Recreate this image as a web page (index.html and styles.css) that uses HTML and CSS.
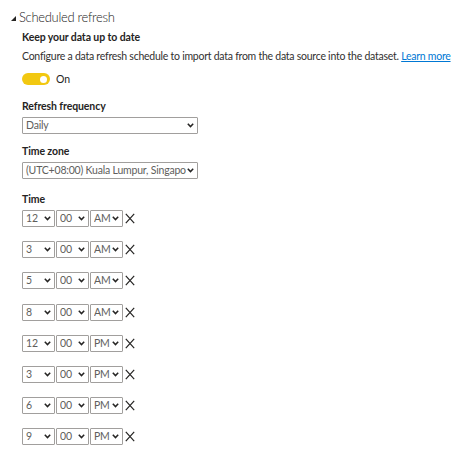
FILE: index.html
```html
<!DOCTYPE html>
<html>
<head>
<meta charset="utf-8">
<link rel="stylesheet" href="styles.css">
</head>
<body>
<div class="panel">
  <div class="section-head">
    <svg class="caret" width="5" height="5" viewBox="0 0 5 5"><polygon points="5,0 5,5 0,5" fill="#252423"/></svg>
    <span class="section-title">Scheduled refresh</span>
  </div>
  <div class="content">
    <div class="subhead">Keep your data up to date</div>
    <div class="desc">Configure a data refresh schedule to import data from the data source into the dataset. <a href="#" class="link">Learn more</a></div>
    <div class="toggle-row">
      <span class="toggle"><span class="knob"></span></span>
      <span class="toggle-label">On</span>
    </div>

    <div class="field-label first">Refresh frequency</div>
    <div class="select wide"><span class="sel-text">Daily</span><svg class="chev" width="7" height="5" viewBox="0 0 7 5"><polyline points="0.8,0.8 3.5,3.6 6.2,0.8" fill="none" stroke="#252423" stroke-width="1.5"/></svg></div>

    <div class="field-label">Time zone</div>
    <div class="select wide"><span class="sel-text">(UTC+08:00) Kuala Lumpur, Singapore</span><svg class="chev" width="7" height="5" viewBox="0 0 7 5"><polyline points="0.8,0.8 3.5,3.6 6.2,0.8" fill="none" stroke="#252423" stroke-width="1.5"/></svg></div>

    <div class="field-label time-label">Time</div>
    <div class="times">
      <div class="time-row"><div class="select small"><span class="sel-text">12</span><svg class="chev" width="7" height="5" viewBox="0 0 7 5"><polyline points="0.8,0.8 3.5,3.6 6.2,0.8" fill="none" stroke="#252423" stroke-width="1.5"/></svg></div><div class="select small"><span class="sel-text">00</span><svg class="chev" width="7" height="5" viewBox="0 0 7 5"><polyline points="0.8,0.8 3.5,3.6 6.2,0.8" fill="none" stroke="#252423" stroke-width="1.5"/></svg></div><div class="select small"><span class="sel-text">AM</span><svg class="chev" width="7" height="5" viewBox="0 0 7 5"><polyline points="0.8,0.8 3.5,3.6 6.2,0.8" fill="none" stroke="#252423" stroke-width="1.5"/></svg></div><svg class="remove" width="10" height="11" viewBox="0 0 10 11"><path d="M0.8,0.8 L9.2,10.2 M9.2,0.8 L0.8,10.2" stroke="#252423" stroke-width="1.2" fill="none"/></svg></div>
      <div class="time-row"><div class="select small"><span class="sel-text">3</span><svg class="chev" width="7" height="5" viewBox="0 0 7 5"><polyline points="0.8,0.8 3.5,3.6 6.2,0.8" fill="none" stroke="#252423" stroke-width="1.5"/></svg></div><div class="select small"><span class="sel-text">00</span><svg class="chev" width="7" height="5" viewBox="0 0 7 5"><polyline points="0.8,0.8 3.5,3.6 6.2,0.8" fill="none" stroke="#252423" stroke-width="1.5"/></svg></div><div class="select small"><span class="sel-text">AM</span><svg class="chev" width="7" height="5" viewBox="0 0 7 5"><polyline points="0.8,0.8 3.5,3.6 6.2,0.8" fill="none" stroke="#252423" stroke-width="1.5"/></svg></div><svg class="remove" width="10" height="11" viewBox="0 0 10 11"><path d="M0.8,0.8 L9.2,10.2 M9.2,0.8 L0.8,10.2" stroke="#252423" stroke-width="1.2" fill="none"/></svg></div>
      <div class="time-row"><div class="select small"><span class="sel-text">5</span><svg class="chev" width="7" height="5" viewBox="0 0 7 5"><polyline points="0.8,0.8 3.5,3.6 6.2,0.8" fill="none" stroke="#252423" stroke-width="1.5"/></svg></div><div class="select small"><span class="sel-text">00</span><svg class="chev" width="7" height="5" viewBox="0 0 7 5"><polyline points="0.8,0.8 3.5,3.6 6.2,0.8" fill="none" stroke="#252423" stroke-width="1.5"/></svg></div><div class="select small"><span class="sel-text">AM</span><svg class="chev" width="7" height="5" viewBox="0 0 7 5"><polyline points="0.8,0.8 3.5,3.6 6.2,0.8" fill="none" stroke="#252423" stroke-width="1.5"/></svg></div><svg class="remove" width="10" height="11" viewBox="0 0 10 11"><path d="M0.8,0.8 L9.2,10.2 M9.2,0.8 L0.8,10.2" stroke="#252423" stroke-width="1.2" fill="none"/></svg></div>
      <div class="time-row"><div class="select small"><span class="sel-text">8</span><svg class="chev" width="7" height="5" viewBox="0 0 7 5"><polyline points="0.8,0.8 3.5,3.6 6.2,0.8" fill="none" stroke="#252423" stroke-width="1.5"/></svg></div><div class="select small"><span class="sel-text">00</span><svg class="chev" width="7" height="5" viewBox="0 0 7 5"><polyline points="0.8,0.8 3.5,3.6 6.2,0.8" fill="none" stroke="#252423" stroke-width="1.5"/></svg></div><div class="select small"><span class="sel-text">AM</span><svg class="chev" width="7" height="5" viewBox="0 0 7 5"><polyline points="0.8,0.8 3.5,3.6 6.2,0.8" fill="none" stroke="#252423" stroke-width="1.5"/></svg></div><svg class="remove" width="10" height="11" viewBox="0 0 10 11"><path d="M0.8,0.8 L9.2,10.2 M9.2,0.8 L0.8,10.2" stroke="#252423" stroke-width="1.2" fill="none"/></svg></div>
      <div class="time-row"><div class="select small"><span class="sel-text">12</span><svg class="chev" width="7" height="5" viewBox="0 0 7 5"><polyline points="0.8,0.8 3.5,3.6 6.2,0.8" fill="none" stroke="#252423" stroke-width="1.5"/></svg></div><div class="select small"><span class="sel-text">00</span><svg class="chev" width="7" height="5" viewBox="0 0 7 5"><polyline points="0.8,0.8 3.5,3.6 6.2,0.8" fill="none" stroke="#252423" stroke-width="1.5"/></svg></div><div class="select small"><span class="sel-text">PM</span><svg class="chev" width="7" height="5" viewBox="0 0 7 5"><polyline points="0.8,0.8 3.5,3.6 6.2,0.8" fill="none" stroke="#252423" stroke-width="1.5"/></svg></div><svg class="remove" width="10" height="11" viewBox="0 0 10 11"><path d="M0.8,0.8 L9.2,10.2 M9.2,0.8 L0.8,10.2" stroke="#252423" stroke-width="1.2" fill="none"/></svg></div>
      <div class="time-row"><div class="select small"><span class="sel-text">3</span><svg class="chev" width="7" height="5" viewBox="0 0 7 5"><polyline points="0.8,0.8 3.5,3.6 6.2,0.8" fill="none" stroke="#252423" stroke-width="1.5"/></svg></div><div class="select small"><span class="sel-text">00</span><svg class="chev" width="7" height="5" viewBox="0 0 7 5"><polyline points="0.8,0.8 3.5,3.6 6.2,0.8" fill="none" stroke="#252423" stroke-width="1.5"/></svg></div><div class="select small"><span class="sel-text">PM</span><svg class="chev" width="7" height="5" viewBox="0 0 7 5"><polyline points="0.8,0.8 3.5,3.6 6.2,0.8" fill="none" stroke="#252423" stroke-width="1.5"/></svg></div><svg class="remove" width="10" height="11" viewBox="0 0 10 11"><path d="M0.8,0.8 L9.2,10.2 M9.2,0.8 L0.8,10.2" stroke="#252423" stroke-width="1.2" fill="none"/></svg></div>
      <div class="time-row"><div class="select small"><span class="sel-text">6</span><svg class="chev" width="7" height="5" viewBox="0 0 7 5"><polyline points="0.8,0.8 3.5,3.6 6.2,0.8" fill="none" stroke="#252423" stroke-width="1.5"/></svg></div><div class="select small"><span class="sel-text">00</span><svg class="chev" width="7" height="5" viewBox="0 0 7 5"><polyline points="0.8,0.8 3.5,3.6 6.2,0.8" fill="none" stroke="#252423" stroke-width="1.5"/></svg></div><div class="select small"><span class="sel-text">PM</span><svg class="chev" width="7" height="5" viewBox="0 0 7 5"><polyline points="0.8,0.8 3.5,3.6 6.2,0.8" fill="none" stroke="#252423" stroke-width="1.5"/></svg></div><svg class="remove" width="10" height="11" viewBox="0 0 10 11"><path d="M0.8,0.8 L9.2,10.2 M9.2,0.8 L0.8,10.2" stroke="#252423" stroke-width="1.2" fill="none"/></svg></div>
      <div class="time-row"><div class="select small"><span class="sel-text">9</span><svg class="chev" width="7" height="5" viewBox="0 0 7 5"><polyline points="0.8,0.8 3.5,3.6 6.2,0.8" fill="none" stroke="#252423" stroke-width="1.5"/></svg></div><div class="select small"><span class="sel-text">00</span><svg class="chev" width="7" height="5" viewBox="0 0 7 5"><polyline points="0.8,0.8 3.5,3.6 6.2,0.8" fill="none" stroke="#252423" stroke-width="1.5"/></svg></div><div class="select small"><span class="sel-text">PM</span><svg class="chev" width="7" height="5" viewBox="0 0 7 5"><polyline points="0.8,0.8 3.5,3.6 6.2,0.8" fill="none" stroke="#252423" stroke-width="1.5"/></svg></div><svg class="remove" width="10" height="11" viewBox="0 0 10 11"><path d="M0.8,0.8 L9.2,10.2 M9.2,0.8 L0.8,10.2" stroke="#252423" stroke-width="1.2" fill="none"/></svg></div>
    </div>
  </div>
</div>
</body>
</html>
```

FILE: styles.css
```css
html, body {
  margin: 0;
  padding: 0;
  background: #ffffff;
}

body {
  font-family: Lato, "Liberation Sans", sans-serif;
  color: #252423;
}

.panel {
  padding: 6px 0 0 11px;
}

.section-head {
  display: flex;
  align-items: center;
  height: 22px;
}

.caret {
  display: block;
  margin-top: 2px;
  margin-right: 3px;
}

.section-title {
  font-size: 13px;
  font-weight: 300;
  letter-spacing: -0.3px;
  color: #252423;
}

.content {
  padding-left: 11px;
}

.subhead {
  font-size: 10.5px;
  font-weight: 700;
  letter-spacing: -0.1px;
  color: #252423;
  margin-top: 1px;
  height: 16px;
  line-height: 16px;
}

.desc {
  font-size: 10.5px;
  letter-spacing: -0.25px;
  color: #323130;
  margin-top: 3px;
  line-height: 16px;
  white-space: nowrap;
}

.link {
  color: #0078d4;
  text-decoration: underline;
}

.toggle-row {
  display: flex;
  align-items: center;
  margin-top: 7px;
  height: 16px;
}

.toggle {
  display: flex;
  align-items: center;
  justify-content: flex-end;
  width: 28px;
  height: 12px;
  border-radius: 6px;
  background: #f2c811;
  padding: 0 3px;
  box-sizing: border-box;
}

.knob {
  width: 7px;
  height: 7px;
  border-radius: 50%;
  background: #ffffff;
}

.toggle-label {
  font-size: 10.5px;
  color: #252423;
  margin-left: 6px;
}

.field-label {
  font-size: 10.5px;
  font-weight: 700;
  letter-spacing: -0.1px;
  color: #252423;
  line-height: 16px;
  margin-top: 9px;
  margin-bottom: 3px;
}

.field-label.first {
  margin-top: 11px;
}

.field-label.time-label {
  margin-top: 12px;
  margin-bottom: 3px;
}

.select {
  display: flex;
  align-items: center;
  box-sizing: border-box;
  height: 17px;
  border: 1px solid #a19f9d;
  border-radius: 1px;
  background: #ffffff;
  padding: 0 3px 0 3px;
  font-size: 10.5px;
  letter-spacing: -0.2px;
  color: #605e5c;
  overflow: hidden;
}

.select.wide {
  width: 176px;
}

.select.small {
  width: 33px;
  margin-right: 1px;
}

.sel-text {
  flex: 1;
  min-width: 0;
  white-space: nowrap;
  overflow: hidden;
  line-height: 15px;
}

.chev {
  display: block;
  flex-shrink: 0;
  margin-left: 1px;
}

.times {
  display: flex;
  flex-direction: column;
  gap: 14.2px;
}

.time-row {
  display: flex;
  align-items: center;
}

.remove {
  display: block;
  margin-left: 1px;
}
```
